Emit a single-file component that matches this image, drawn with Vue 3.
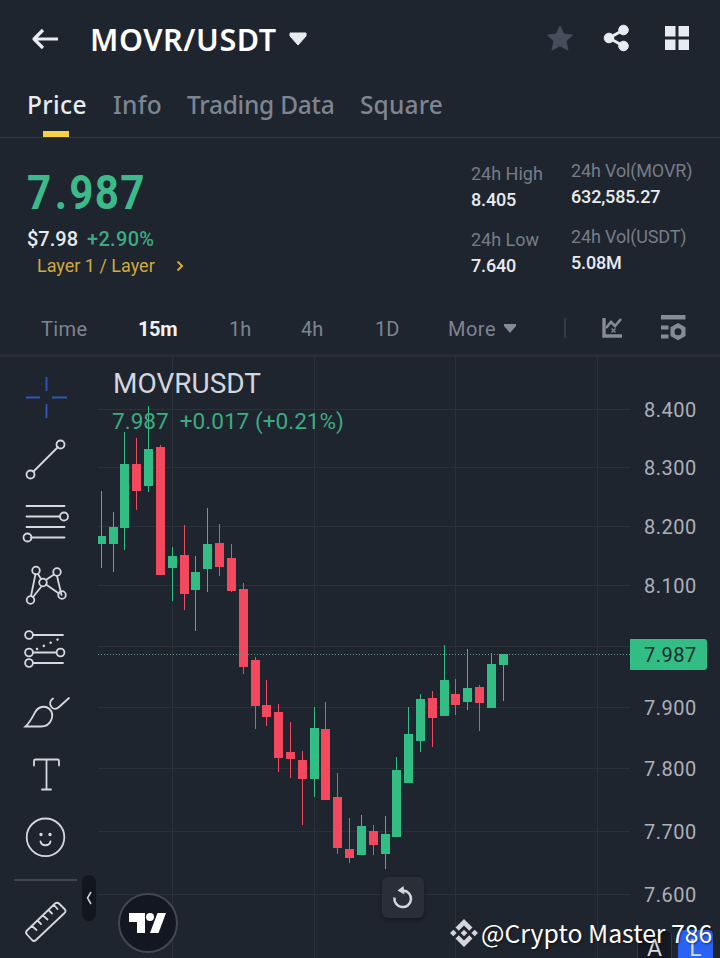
<script setup>
const tabs = ['Price', 'Info', 'Trading Data', 'Square']

const X0 = 98
const Y0 = 354

const priceTicks = [
  { label: '8.400', y: 409.5 },
  { label: '8.300', y: 467.5 },
  { label: '8.200', y: 526.5 },
  { label: '8.100', y: 585.5 },
  { label: '', y: 646.5 },
  { label: '7.900', y: 707.5 },
  { label: '7.800', y: 768.5 },
  { label: '7.700', y: 831.5 },
  { label: '7.600', y: 894.5 },
]
const timeTicks = [172.5, 314.5, 455.5, 597.5]

// x centre, wick top, body top, body bottom, wick bottom, rising
const candles = [
  [101.5, 491, 536, 544, 568, 1],
  [113.5, 512, 527, 544, 572, 1],
  [124.5, 432, 464, 528, 550, 1],
  [136.5, 438, 464, 491, 510, 0],
  [148.5, 406, 449, 486, 492, 1],
  [160.5, 445, 447, 575, 575, 0],
  [172.5, 547, 556, 568, 601, 1],
  [184.5, 525, 555, 594, 610, 0],
  [195.5, 556, 572, 590, 631, 1],
  [207.5, 508, 544, 569, 592, 1],
  [219.5, 524, 543, 567, 576, 0],
  [231.5, 544, 558, 591, 592, 0],
  [243.5, 583, 589, 667, 674, 0],
  [255.5, 657, 660, 706, 729, 0],
  [266.5, 680, 705, 717, 726, 0],
  [278.5, 704, 712, 758, 772, 0],
  [290.5, 722, 752, 759, 778, 0],
  [302.5, 751, 760, 779, 825, 0],
  [314.5, 707, 728, 779, 797, 1],
  [325.5, 702, 729, 800, 800, 0],
  [337.5, 773, 797, 848, 854, 0],
  [349.5, 818, 849, 858, 863, 0],
  [361.5, 815, 826, 855, 855, 1],
  [373.5, 825, 831, 845, 855, 0],
  [385.5, 816, 834, 854, 869, 1],
  [396.5, 757, 770, 837, 837, 1],
  [408.5, 707, 734, 783, 783, 1],
  [420.5, 694, 699, 741, 752, 1],
  [432.5, 691, 698, 718, 747, 0],
  [444.5, 645, 680, 716, 716, 1],
  [455.5, 679, 694, 705, 715, 0],
  [467.5, 649, 688, 702, 710, 1],
  [479.5, 685, 687, 703, 731, 0],
  [491.5, 653, 664, 708, 708, 1],
  [503.5, 654, 654, 665, 701, 1],
].map(([x, high, top, bottom, low, up]) => ({
  x: x - X0,
  high: high - Y0,
  top: top - Y0,
  height: bottom - top,
  low: low - Y0,
  color: up ? '#32bd85' : '#f3485e',
}))
</script>

<template>
  <div class="screen">
    <header class="topbar">
      <svg class="back" width="28" height="22" viewBox="0 0 28 22" fill="none" stroke="#e8ebf0" stroke-width="3.2">
        <path d="M27 11H3M12 2L3 11l9 9" stroke-linejoin="round" />
      </svg>
      <h1 class="pair">MOVR/USDT</h1>
      <svg class="caret" width="18" height="14" viewBox="0 0 18 14"><path d="M1 1H17V4L9 13 1 4Z" fill="#e8ebf0" stroke="#e8ebf0" stroke-linejoin="round" /></svg>
      <div class="actions">
        <svg width="28" height="28" viewBox="0 0 28 28"><path d="M14 2l3.7 8 8.8 1-6.4 6.1 1.8 8.9L14 21.7 6.1 26l1.8-8.9L1.5 11l8.8-1z" fill="#474d5a" stroke="#474d5a" stroke-linejoin="round" /></svg>
        <svg width="28" height="28" viewBox="0 0 28 28" fill="#e8ebf0" stroke="#e8ebf0">
          <path d="M21.5 6L7 14l14.500 8" fill="none" stroke-width="3" />
          <circle cx="21.500" cy="6" r="4.800" /><circle cx="7" cy="14" r="4.800" /><circle cx="21.500" cy="22" r="4.800" />
        </svg>
        <svg width="24" height="24" viewBox="0 0 24 24" fill="#e8ebf0"><path d="M0 0h10.500v10.500H0zM13.500 0H24v10.500H13.500zM0 13.500h10.500V24H0zM13.500 13.500H24V24H13.500z" /></svg>
      </div>
    </header>

    <nav class="tabs">
      <span v-for="(t, i) in tabs" :key="t" class="tab" :class="['t' + i, { active: i === 0 }]">{{ t }}</span>
    </nav>

    <section class="summary">
      <div class="quote">
        <div class="last">7<span class="dot">.</span>987</div>
        <div class="fiat"><span class="usd">$7.98</span><span class="up">+2.90%</span></div>
        <div class="sector">
          <span>Layer 1 / Layer</span>
          <svg width="8" height="12" viewBox="0 0 8 12" fill="none" stroke="#d9ad2b" stroke-width="2"><path d="M1.500 1.500L6 6l-4.500 4.500" /></svg>
        </div>
      </div>
      <dl class="stats left">
        <dt class="s1">24h High</dt><dd>8.405</dd>
        <dt class="s2">24h Low</dt><dd>7.640</dd>
      </dl>
      <dl class="stats right">
        <dt class="s3">24h Vol(MOVR)</dt><dd>632,585.27</dd>
        <dt class="s4">24h Vol(USDT)</dt><dd>5.08M</dd>
      </dl>
    </section>

    <div class="intervals">
      <span class="i0">Time</span>
      <span class="i1 active">15m</span>
      <span class="i2">1h</span>
      <span class="i3">4h</span>
      <span class="i4">1D</span>
      <span class="i5">More</span>
      <svg class="more" width="12" height="9" viewBox="0 0 12 9"><path d="M0 0H12V2L6 9 0 2Z" fill="#848b97" /></svg>
      <i class="sep"></i>
      <svg class="ind" width="20" height="20" viewBox="0 0 20 20" fill="none" stroke="#858b97">
        <path d="M2 0V18H20" stroke-width="3.400" /><path d="M4 10l5-6 4 4 6-7" stroke-width="2.600" /><path d="M9.500 14.500l4-4M9.500 10.500l4 4" stroke-width="1.200" />
      </svg>
      <svg class="cfg" width="25" height="26" viewBox="0 0 25 26" fill="#858b97">
        <path d="M0 0h24.500v4.500H0zM0 10.500h7.500v4H0zM0 19.500h7.500v4H0z" />
        <path fill-rule="evenodd" d="M17 8l7.500 4.300v8.600L17 25.200l-7.500-4.300v-8.600zM17 13.200a3.500 3.500 0 1 0 0 7 3.500 3.500 0 0 0 0-7z" />
      </svg>
    </div>

    <main class="chart">
      <aside class="tools">
        <svg width="60" height="62.800" viewBox="0 0 60 62.800" class="tool cross"><path d="M10 31.500h14M36 31.500h15M30.500 11v14M30.500 38v14" /></svg>
        <svg width="60" height="62.800" viewBox="0 0 60 62.800" class="tool"><path d="M17.500 42.500L42 18" /><circle cx="14.500" cy="45.500" r="4" /><circle cx="44.500" cy="15.500" r="4" /></svg>
        <svg width="60" height="62.800" viewBox="0 0 60 62.800" class="tool"><path d="M10.500 14h38M10.500 24.500h33M10.500 35h38M15 45.500h33.500" /><circle cx="48" cy="24.500" r="4" /><circle cx="11.500" cy="45.500" r="4" /></svg>
        <svg width="60" height="62.800" viewBox="0 0 60 62.800" class="tool"><path d="M15 42l4.500-22M22 20l3 5M30.500 25.500l7.500-5M41 22l4.500 19M30 30.500l13 9M17 43l8-10" /><circle cx="20" cy="16.500" r="3.800" /><circle cx="41" cy="18" r="3.800" /><circle cx="27" cy="28.500" r="3.800" /><circle cx="14.500" cy="46" r="3.800" /><circle cx="46" cy="41" r="3.800" /></svg>
        <svg width="60" height="62.800" viewBox="0 0 60 62.800" class="tool"><path d="M17 18h30M17 35.500h23M17 46h30" /><circle cx="13" cy="18" r="3.900" /><circle cx="13" cy="35.500" r="3.900" /><circle cx="44.500" cy="35.500" r="3.900" /><circle cx="13" cy="46" r="3.900" /><path d="M21 32l25-11.500" stroke-width="2.500" stroke-dasharray="0.100 7.400" /></svg>
        <svg width="60" height="62.800" viewBox="0 0 60 62.800" class="tool"><path d="M9.500 46.500C14 42.500 17 36 19 32.500c3-6 10-7.500 14.500-3.500 5.500 5.500 2 17.500-8.500 17.500zM37 18.500c-3 2-4 5.500-1.500 8.500 2 2.500 5 2.500 7.500 0L53 18" /></svg>
        <svg width="60" height="62.800" viewBox="0 0 60 62.800" class="tool"><path d="M18 22.500v-4.500q0-1.500 1.500-1.500h22q1.500 0 1.500 1.500V22.500M30.500 16.500v30M26 46.500h9" /></svg>
        <svg width="60" height="62.800" viewBox="0 0 60 62.800" class="tool"><circle cx="29.500" cy="31.300" r="18.800" /><path d="M24.500 35.500c1 5 9 5 10 0" /><path d="M25 28.500v.100M34 28.500v.100" stroke-width="3.400" /></svg>
        <hr />
        <svg width="60" height="62" viewBox="0 0 60 62" class="tool ruler"><path d="M11 40.500L39 13.500q2-1.500 4 0l5.500 5.500q2 2 0 4L20 50q-2 2-4 0L11 44.500q-2-2 0-4zM16 36l4.500 4M21.500 30.500l3.500 3.500M27 25.500l4.500 4M32.500 20l3.500 3.500M38 15l3.500 4" /></svg>
        <div class="handle"><svg width="6" height="14" viewBox="0 0 6 14" fill="none" stroke="#d5d8df" stroke-width="1.500"><path d="M5 1L1.500 7 5 13" /></svg></div>
      </aside>

      <div class="plot">
        <svg class="canvas" width="622" height="604" viewBox="0 0 622 604">
          <g stroke="#2b3139">
            <path v-for="t in priceTicks" :key="t.y" :d="`M0 ${t.y - Y0}H532`" />
            <path v-for="x in timeTicks" :key="x" :d="`M${x - X0} 2V604`" />
          </g>
          <g v-for="c in candles" :key="c.x" :fill="c.color">
            <rect :x="c.x - 0.5" :y="c.high" width="1" :height="c.low - c.high" />
            <rect :x="Math.max(c.x - 4.5, 0)" :y="c.top" :width="c.x < 4 ? 8 : 9" :height="c.height" />
          </g>
          <path d="M0 300.500H532" stroke="#6b9c91" stroke-dasharray="1 2" />
          <path d="M532 285H606q3 0 3 3v25q0 3-3 3H532z" fill="#32bd85" />
          <g class="axis">
            <text v-for="t in priceTicks" :key="t.y" x="546" :y="t.y - Y0 + 7.5">{{ t.label }}</text>
            <text class="now" x="546" y="308">7.987</text>
          </g>
        </svg>
        <div class="legend">
          <div class="symbol">MOVRUSDT</div>
          <div class="change"><span>7.987</span><span>+0.017 (+0.21%)</span></div>
        </div>
        <div class="tv">
          <svg width="38" height="20" viewBox="0 0 38 20" fill="#fff"><path d="M0 0H16V20H8V9H0z" /><circle cx="21" cy="4" r="4" /><path d="M28.500 0H37L29.500 20H21z" /></svg>
        </div>
        <div class="reset">
          <svg width="22" height="24" viewBox="0 0 22 24" fill="none" stroke="#d5d8df" stroke-width="2.500"><path d="M2.500 11.500a8.300 8.300 0 1 0 8.500-7" /><path d="M11.500 0L5.500 4.500l7 4z" fill="#d5d8df" stroke="none" /></svg>
        </div>
        <div class="mode auto">A</div>
        <div class="mode log">L</div>
        <div class="mark">
          <svg width="28" height="28" viewBox="0 0 28 28" fill="#d4d6db"><path d="M14 0l8.500 8.500-3.300 3.300L14 6.600l-5.200 5.200-3.300-3.300zM14 28l8.500-8.500-3.300-3.300L14 21.400l-5.200-5.200-3.300 3.300zM3.300 10.700L6.600 14l-3.300 3.300L0 14zM24.700 10.700L28 14l-3.300 3.300-3.300-3.300zM14 10.700l3.300 3.300-3.300 3.300-3.300-3.300z" /></svg>
          <span>@Crypto Master 786</span>
        </div>
      </div>
    </main>
  </div>
</template>

<style>
body { background: #1f252f; }
</style>

<style scoped>
.screen { width: 720px; height: 958px; overflow: hidden; background: #1f252f; font-family: Roboto, sans-serif; color: #e8ebf0; box-sizing: border-box; }
svg { display: block; flex: none; }
span, dt, dd { white-space: nowrap; }
.topbar { height: 78px; box-sizing: border-box; display: flex; align-items: center; padding: 0 31px 1px 31px; }
.pair { margin: 0 0 0 31px; width: 187px; font: 600 30.5px/40px "Noto Sans", sans-serif; color: #fff; letter-spacing: .6px; white-space: nowrap; }
.caret { margin-left: 12px; }
.actions { margin-left: auto; display: flex; align-items: center; gap: 28px; }
.actions svg { margin-top: -1px; }
.actions svg:last-child { margin-left: 7px; }
.tabs { height: 59px; display: flex; border-bottom: 1px solid #323843; padding-left: 27px; box-sizing: content-box; }
.tab { position: relative; font: 500 24.5px/53px "Noto Sans", sans-serif; color: #7e8490; letter-spacing: .15px; }
.tab.t0 { width: 86px; letter-spacing: .4px; }
.tab.t1 { width: 74px; letter-spacing: .3px; }
.tab.t2 { width: 173px; letter-spacing: -.25px; }
.tab.active { color: #e8ebf0; }
.tab.active::after { content: ""; position: absolute; left: 16px; bottom: 0; width: 26px; height: 6px; background: #f6d147; }
.tab:not(:first-child) { margin-left: 0; }
.summary { height: 162px; display: flex; }
.quote { width: 444px; padding-left: 27px; box-sizing: content-box; }
.last { font-weight: 700; font-size: 49px; line-height: 60px; margin-top: 25px; color: #3cba89; letter-spacing: 1.6px; transform: scaleX(.86); transform-origin: left; }
.dot { padding: 0 1px 0 2.500px; }
.fiat { display: flex; gap: 9px; font-weight: 500; font-size: 20px; line-height: 28px; margin-top: 2px; }
.up { color: #3cab80; letter-spacing: .3px; }
.sector { display: flex; align-items: center; gap: 21px; font-size: 18px; line-height: 26px; color: #d0a940; padding-left: 10px; }
.stats { margin: 0; font-size: 18px; line-height: 26px; }
.stats dt { color: #767c88; }
.stats dd { margin: 0 0 14px; font-weight: 500; letter-spacing: -.15px; }
.left { width: 100px; padding-top: 23px; }
.right { padding-top: 20px; }
.s3, .s4 { letter-spacing: -.15px; }
.intervals { height: 57px; display: flex; align-items: center; padding: 3px 0 0 41px; font-size: 20px; color: #7e8490; border-bottom: 3px solid #272c36; box-sizing: border-box; }
.intervals > svg, .sep { margin-top: -1px; }
.intervals .active { color: #f0f2f5; font-weight: 700; letter-spacing: -.4px; }
.i0 { width: 97px; letter-spacing: .4px; } .i1 { width: 91px; } .i2 { width: 72px; } .i3 { width: 74px; } .i4 { width: 73px; } .i5 { width: 56px; letter-spacing: .5px; }
.sep { width: 2px; height: 20px; background: #363c47; margin-left: 48px; }
.ind { margin-left: 36px; }
.cfg { margin-left: 39px; }
.chart { display: flex; height: 604px; margin-top: -3px; }
.tools { position: relative; width: 98px; padding: 12px 0 0 16px; box-sizing: border-box; }
.tool { fill: none; stroke: #d5d8df; stroke-width: 1.800; stroke-linecap: round; overflow: visible; }
.cross { stroke: #3157bd; stroke-linecap: butt; }
hr { width: 63px; height: 2px; margin: 11px 0 9px -2px; border: 0; background: #414651; }
.handle { position: absolute; left: 82px; top: 521px; width: 14px; height: 46px; border-radius: 7px; background: #12161f; display: flex; align-items: center; justify-content: center; }
.plot { position: relative; width: 622px; }
.axis text { font: 20px Roboto, sans-serif; fill: #adb0b9; letter-spacing: .500px; }
.axis .now { fill: #182c2b; }
.legend { position: absolute; left: 15px; top: 13px; }
.symbol { font-size: 28px; line-height: 34px; color: #d3d6de; }
.change { display: flex; gap: 11px; margin: 2px 0 0 -1px; font-size: 22.600px; line-height: 38px; color: #3cab80; }
.tv { position: absolute; left: 20px; top: 539px; width: 56px; height: 56px; border: 2px solid #434751; border-radius: 50%; background: #121722; display: flex; align-items: center; justify-content: center; }
.reset { position: absolute; left: 284px; top: 523px; width: 42px; height: 41px; border-radius: 6px; background: #2a2e39; box-shadow: 0 2px 4px #0005; display: flex; align-items: center; justify-content: center; }
.mode { position: absolute; top: 576px; height: 40px; width: 35px; box-sizing: border-box; border-radius: 5px; font-size: 23px; line-height: 38px; text-align: center; color: #d5d8df; }
.auto { left: 539px; border: 1px solid #343944; background: #141922; line-height: 36px; }
.log { left: 580px; background: #2962f5; }
.mark { position: absolute; left: 352px; top: 561px; display: flex; align-items: center; gap: 3px; font: 24.800px/34px "Noto Sans CJK SC", sans-serif; color: #fff; text-shadow: 1px 1px 2px #0008; }
.mark svg { margin-top: 2px; }
</style>
